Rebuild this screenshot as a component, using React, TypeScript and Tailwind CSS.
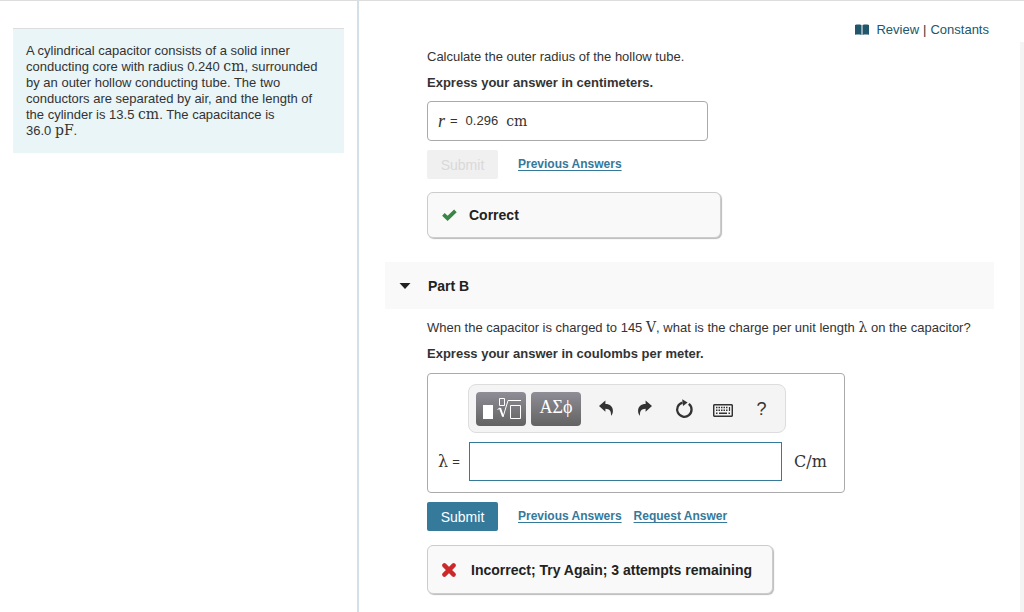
import type { ReactNode } from "react";

function Unit({ children }: { children: ReactNode }) {
  return <span className="font-['DejaVu_Serif',serif] text-sm leading-none">{children}</span>;
}

function TextLink({ children }: { children: ReactNode }) {
  return (
    <a href="#" className="text-xs leading-4 font-bold text-[#35799b] underline underline-offset-2">
      {children}
    </a>
  );
}

function Feedback({ icon, className, children }: { icon: ReactNode; className: string; children: ReactNode }) {
  return (
    <div
      role="status"
      className={`flex max-w-full items-center rounded-md border border-[#ccc] bg-[#f9f9f9] pl-[14px] text-sm font-bold text-[#222] shadow-[1px_1px_1px_0px_#bbb] ${className}`}
    >
      {icon}
      {children}
    </div>
  );
}

function CheckIcon() {
  return (
    <svg width="15" height="12" viewBox="0 0 15 12" className="mr-3 text-[#3a8645]" aria-hidden="true">
      <path d="M1.4 5.4L5.6 9.4L13.4 1.8" fill="none" stroke="currentColor" strokeWidth="3.7" />
    </svg>
  );
}

function CrossIcon() {
  return (
    <svg width="14" height="14" viewBox="0 0 14 14" className="mr-[15px] text-[#cc2a2a]" aria-hidden="true">
      <path d="M2.4 2.4L11.6 11.6M11.6 2.4L2.4 11.6" fill="none" stroke="currentColor" strokeWidth="4.4" strokeLinecap="round" />
    </svg>
  );
}

function BookIcon() {
  return (
    <svg width="14" height="12" viewBox="0 0 14 12" fill="currentColor" aria-hidden="true">
      <path d="M0 1C2.2 .4 4.4 .4 6.5 1V10.9C4.4 10.3 2.2 10.3 0 10.8Z" />
      <path d="M14 1C11.8 .4 9.6 .4 7.5 1V10.9C9.6 10.3 11.8 10.3 14 10.8Z" />
    </svg>
  );
}

function TemplatesIcon() {
  return (
    <svg width="50" height="34" viewBox="0 0 50 34" fill="none" stroke="#fff" aria-hidden="true">
      <path d="M7 13H17V27H7Z" fill="#fff" stroke="none" />
      <path d="M23.5 6.5H28.5V13.5H23.5Z" strokeWidth="1" />
      <path d="M21.5 17.5L24 16" strokeWidth="1" />
      <path d="M24 16L27 24.5" strokeWidth="2" />
      <path d="M27 25L32 8.5H45" strokeWidth="1" />
      <path d="M34.5 13.5H44.5V26.5H34.5Z" strokeWidth="1" />
    </svg>
  );
}

function UndoIcon() {
  return (
    <svg width="16" height="18" viewBox="0 0 16 18" fill="currentColor" aria-hidden="true">
      <path d="M1 6L7.4 .6V4C12 4 15.2 6.6 14.9 11.4C14.8 13 14 14.8 13 15.8C13.4 11 11.6 8.8 7.4 8.7V11.8Z" />
    </svg>
  );
}

function RedoIcon() {
  return (
    <svg width="16" height="18" viewBox="0 0 16 18" fill="currentColor" aria-hidden="true">
      <path d="M15 6L8.6 .6V4C4 4 .8 6.6 1.1 11.4C1.2 13 2 14.8 3 15.8C2.6 11 4.4 8.8 8.6 8.7V11.8Z" />
    </svg>
  );
}

function ResetIcon() {
  return (
    <svg width="18" height="20" viewBox="0 0 18 20" aria-hidden="true">
      <path d="M13.8 4.9A7.2 7.2 0 1 1 7.5 3.6" fill="none" stroke="currentColor" strokeWidth="2.3" />
      <path d="M7.2 .2L12.6 3.5L8 7Z" fill="currentColor" />
    </svg>
  );
}

function KeyboardIcon() {
  return (
    <svg width="20" height="16" viewBox="0 -3 20 16" fill="none" stroke="currentColor" aria-hidden="true">
      <rect x=".7" y=".7" width="18.6" height="11.6" rx="1" strokeWidth="1.5" />
      <path d="M3 3.5H15.5" strokeDasharray="1.5 1" strokeWidth="1.3" />
      <path d="M3 6.2H15" strokeDasharray="1.5 1" strokeWidth="1.5" />
      <path d="M16.5 3V7" strokeWidth="1.2" />
      <path d="M3 9.3H4.5M6 9.3H14M15.5 9.3H17" strokeWidth="1.5" />
    </svg>
  );
}

const tools = [
  { label: "Undo", icon: <UndoIcon /> },
  { label: "Redo", icon: <RedoIcon /> },
  { label: "Reset", icon: <ResetIcon /> },
  { label: "Keyboard shortcuts", icon: <KeyboardIcon /> },
  { label: "Help", icon: <span className="text-lg">?</span> },
];

const paletteButton =
  "flex h-[34px] w-[50px] items-center justify-center rounded bg-linear-to-b from-[#8f8d96] to-[#636363] text-white";

function Toolbar() {
  return (
    <div className="ml-10 flex h-[49px] w-[318px] items-center rounded-lg border border-[#ddd] bg-[#f4f4f4] pl-[7px]">
      <button aria-label="Templates" className={paletteButton}>
        <TemplatesIcon />
      </button>
      <button aria-label="Symbols" className={`${paletteButton} ml-[5px] pb-1 font-['Liberation_Serif',serif] text-lg`}>
        ΑΣϕ
      </button>
      <div className="ml-[5px] flex">
        {tools.map((tool) => (
          <button key={tool.label} aria-label={tool.label} className="flex h-8 w-[39px] items-center justify-center">
            {tool.icon}
          </button>
        ))}
      </div>
    </div>
  );
}

export default function App() {
  return (
    <div className="flex min-h-screen border-t border-[#ddd] bg-white font-['Liberation_Sans',Arial,sans-serif] text-[13px] leading-4 text-[#333]">
      <aside className="w-[359px] shrink-0 border-r-2 border-[#d5dfe8] pt-[27px] pr-[13px] pl-[13px]">
        <p className="border-t border-[#ddd] bg-[#e9f5f7] py-[14px] pr-5 pl-[13px]">
          A cylindrical capacitor consists of a solid inner conducting core with radius 0.240 <Unit>cm</Unit>, surrounded
          by an outer hollow conducting tube. The two conductors are separated by air, and the length of the cylinder is
          13.5 <Unit>cm</Unit>. The capacitance is 36.0&nbsp;<Unit>pF</Unit>.
        </p>
      </aside>

      <main className="flex min-w-0 flex-1 flex-col">
        <nav className="flex h-[41px] items-center justify-end gap-1 pt-4 pr-[35px] text-[#21566b]">
          <a href="#" className="flex items-center gap-[7px]">
            <BookIcon />
            Review
          </a>
          <span className="text-[#333]">|</span>
          <a href="#">Constants</a>
        </nav>

        <div className="flex-1 border-r-4 border-[#f4f4f4] pr-[26px] pl-[26px]">
          <section className="pt-[7px] pl-[42px]">
            <p>Calculate the outer radius of the hollow tube.</p>
            <p className="mt-[10px] font-bold">Express your answer in centimeters.</p>
            <div className="mt-[10px] flex h-10 w-[281px] items-center rounded border border-[#aaa] pl-[10px]">
              <i className="font-['Liberation_Serif',serif] text-lg">r</i>
              <span className="ml-[5px]">=</span>
              <output className="mx-2">0.296</output>
              <Unit>cm</Unit>
            </div>
            <div className="mt-[9px] flex items-start">
              <button disabled className="h-[29px] w-[71px] rounded-xs bg-[#f0f0f0] text-sm text-[#d9d9d9]">
                Submit
              </button>
              <div className="mt-[6px] ml-5 flex">
                <TextLink>Previous Answers</TextLink>
              </div>
            </div>
            <Feedback className="mt-[13px] h-[46px] w-[294px]" icon={<CheckIcon />}>
              Correct
            </Feedback>
          </section>

          <section className="mt-6">
            <h2 className="bg-[#f9f9f9] text-sm font-bold text-[#222]">
              <button aria-expanded="true" className="flex h-[47px] w-full items-center pl-[14px]">
                <svg width="12" height="6" viewBox="0 0 12 6" fill="currentColor" aria-hidden="true">
                  <path d="M.5 0H11.5L6 6Z" />
                </svg>
                <span className="ml-[17px]">Part B</span>
              </button>
            </h2>
            <div className="pt-[11px] pl-[42px]">
              <p>
                When the capacitor is charged to 145 <Unit>V</Unit>, what is the charge per unit length{" "}
                <Unit>λ</Unit> on the capacitor?
              </p>
              <p className="mt-[10px] font-bold">Express your answer in coulombs per meter.</p>
              <div className="mt-[11px] h-[120px] w-[418px] rounded border border-[#aaa] pt-[10px]">
                <Toolbar />
                <div className="mt-[9px] flex items-center pl-[10px]">
                  <label htmlFor="lambda" className="flex w-[31px] shrink-0 items-center gap-1">
                    <span className="font-['DejaVu_Serif',serif] text-base">λ</span>
                    <span>=</span>
                  </label>
                  <input id="lambda" type="text" className="h-[39px] w-[313px] border border-[#35799b] bg-white px-2 outline-none" />
                  <span className="ml-3 font-['DejaVu_Serif',serif] text-base">C/m</span>
                </div>
              </div>
              <div className="mt-[9px] flex items-start">
                <button className="h-[29px] w-[71px] rounded-xs bg-[#35799b] text-sm text-white">Submit</button>
                <div className="mt-[6px] ml-5 flex gap-3">
                  <TextLink>Previous Answers</TextLink>
                  <TextLink>Request Answer</TextLink>
                </div>
              </div>
              <Feedback className="mt-[14px] h-[49px] w-[346px]" icon={<CrossIcon />}>
                Incorrect; Try Again; 3 attempts remaining
              </Feedback>
            </div>
          </section>
        </div>
      </main>
    </div>
  );
}
